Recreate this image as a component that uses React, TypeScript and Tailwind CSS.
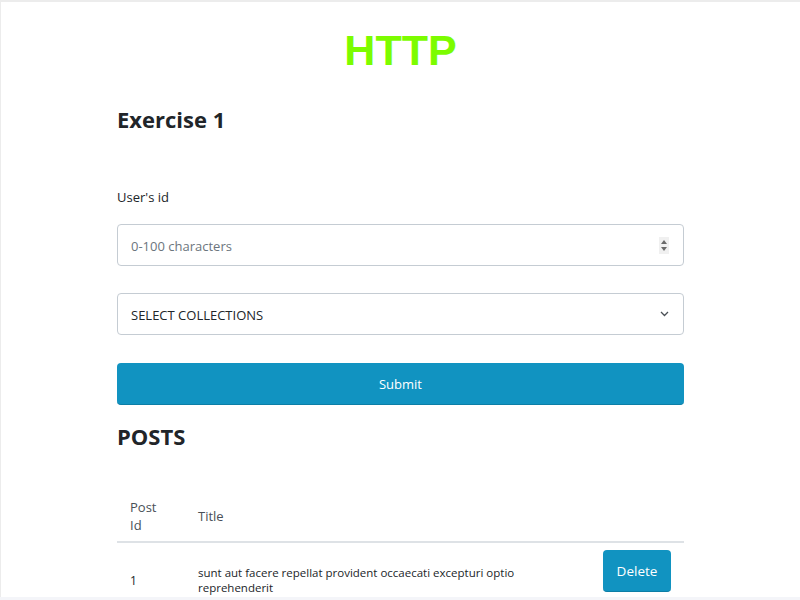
import React from "react";

export default function App() {
  return (
    <div className="w-[800px] h-[600px] overflow-hidden flex flex-col bg-white" style={{ fontFamily: '"Open Sans", "Noto Sans", sans-serif' }}>
      <div className="flex-1 min-h-0 overflow-hidden border-t-2 border-l border-[#ececec]">
        <div className="w-[567px] mx-auto">
          <h1 className="text-center text-[43px] font-bold text-[#7cfc00] leading-[48px] mt-[24px]" style={{ fontFamily: '"Liberation Sans", Arial, sans-serif' }}>
            HTTP
          </h1>
          <h2 className="mt-[30px] text-[22px] font-bold text-[#212529] leading-[30px]">Exercise 1</h2>
          <label className="block mt-[53px] text-[13px] text-[#212529] leading-[20px]">User's id</label>
          <div className="mt-[17px] h-[42px] rounded-[4px] border border-[#c5ccd3] flex items-center pl-[13px] pr-[14px]">
            <span className="flex-1 text-[13px] text-[#6c757d] pt-[3px]">0-100 characters</span>
            <div className="w-[10px] h-[17px] bg-[#f0f0f0] flex flex-col items-center justify-center gap-[3px]">
              <svg width="6" height="4" viewBox="0 0 6 4"><path d="M3 0 L6 4 L0 4 Z" fill="#6a6a6a" /></svg>
              <svg width="6" height="4" viewBox="0 0 6 4"><path d="M0 0 L6 0 L3 4 Z" fill="#6a6a6a" /></svg>
            </div>
          </div>
          <div className="mt-[27px] h-[42px] rounded-[4px] border border-[#c5ccd3] flex items-center pl-[13px] pr-[14px]">
            <span className="flex-1 text-[13px] text-[#212529] pt-[3px]">SELECT COLLECTIONS</span>
            <svg width="9" height="6" viewBox="0 0 9 6"><path d="M1 1 L4.5 4.5 L8 1" fill="none" stroke="#4a4f55" strokeWidth="1.3" /></svg>
          </div>
          <button className="mt-[28px] w-full h-[42px] rounded-[4px] bg-[#1193c1] border-b border-[#0c7ea6] text-white text-[13px] pt-[2px]">
            Submit
          </button>
          <h2 className="mt-[16px] text-[22px] font-bold text-[#212529] leading-[30px]">POSTS</h2>
          <table className="mt-[38px] w-full border-collapse">
            <thead>
              <tr className="border-b-2 border-[#dee2e6]">
                <th className="w-[68px] px-[13px] pt-[9px] pb-[7px] text-left font-normal text-[13px] leading-[18px] text-[#495057] align-middle">
                  <span className="inline-block w-min">Post Id</span>
                </th>
                <th className="px-[13px] pt-[9px] pb-[7px] text-left font-normal text-[13px] leading-[18px] text-[#495057] align-middle">Title</th>
                <th className="w-[94px]"></th>
              </tr>
            </thead>
            <tbody>
              <tr>
                <td className="px-[13px] pt-[6px] text-[12px] text-[#212529] align-middle">1</td>
                <td className="px-[13px] pt-[4px] text-[11.5px] leading-[15px] text-[#212529] align-middle">
                  <div className="w-[340px]">sunt aut facere repellat provident occaecati excepturi optio reprehenderit</div>
                </td>
                <td className="pl-[13px] pr-[13px] pt-[7px] pb-[21px] align-middle">
                  <button className="w-[68px] h-[42px] rounded-[4px] bg-[#1193c1] border-b border-[#0c7ea6] text-white text-[13.5px] pt-[2px]">Delete</button>
                </td>
              </tr>
            </tbody>
          </table>
        </div>
      </div>
      <div className="h-[3px] bg-[#f4f5f9] shrink-0" />
    </div>
  );
}
